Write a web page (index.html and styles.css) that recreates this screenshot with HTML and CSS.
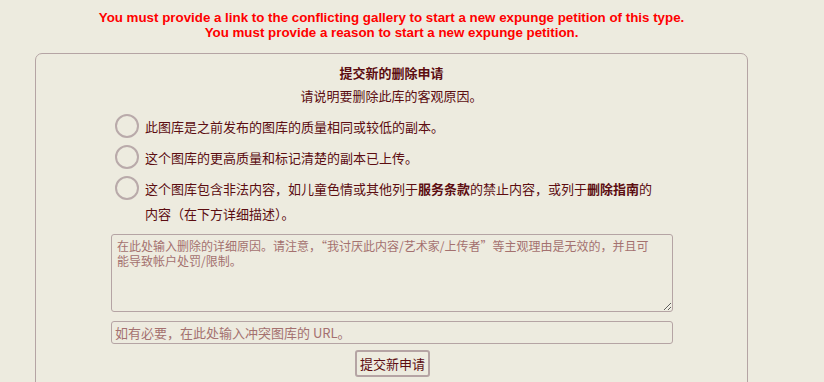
FILE: index.html
```html
<!DOCTYPE html>
<html lang="zh-CN">
<head>
<meta charset="utf-8">
<title>提交新的删除申请</title>
<link rel="stylesheet" href="styles.css">
</head>
<body>
<div class="page">
  <div class="errors">
    <p>You must provide a link to the conflicting gallery to start a new expunge petition of this type.</p>
    <p>You must provide a reason to start a new expunge petition.</p>
  </div>
  <div class="box">
    <h1 class="title">提交新的删除申请</h1>
    <p class="subtitle">请说明要删除此库的客观原因。</p>
    <div class="options">
      <label class="option"><span class="radio"></span><span class="otext">此图库是之前发布的图库的质量相同或较低的副本。</span></label>
      <label class="option"><span class="radio"></span><span class="otext">这个图库的更高质量和标记清楚的副本已上传。</span></label>
      <label class="option"><span class="radio"></span><span class="otext">这个图库包含非法内容，如儿童色情或其他列于<b>服务条款</b>的禁止内容，或列于<b>删除指南</b>的内容（在下方详细描述）。</span></label>
    </div>
    <textarea class="reason" placeholder="在此处输入删除的详细原因。请注意，“我讨厌此内容/艺术家/上传者”等主观理由是无效的，并且可能导致帐户处罚/限制。"></textarea>
    <input class="url" type="text" placeholder="如有必要，在此处输入冲突图库的 URL。">
    <div class="actions"><button class="submit" type="button">提交新申请</button></div>
  </div>
</div>
</body>
</html>
```
FILE: styles.css
```css
html, body {
  margin: 0;
  padding: 0;
  background: #EDEBDF;
}
body {
  color: #5C0D11;
  font-family: "Liberation Sans", "Noto Sans CJK SC", sans-serif;
  overflow: hidden;
}
.page {
  width: 783px;
}
.errors {
  padding-top: 10px;
  text-align: center;
  color: #FF0000;
  font-weight: bold;
  font-size: 13.33px;
  line-height: 15px;
}
.errors p {
  margin: 0;
}
.box {
  margin: 13px 0 0 35px;
  width: 711px;
  height: 360px;
  border: 1px solid #B5A4A4;
  border-radius: 7px;
  box-sizing: content-box;
  font-family: "Noto Sans CJK SC", "Liberation Sans", sans-serif;
  font-size: 13px;
}
.title {
  margin: 10px 0 0;
  font-size: 13px;
  font-weight: bold;
  line-height: 17px;
  text-align: center;
}
.subtitle {
  margin: 6px 0 0;
  line-height: 17px;
  text-align: center;
}
.options {
  margin: 10px 0 0 79px;
  width: 560px;
  display: flex;
  flex-direction: column;
  gap: 6px;
}
.option {
  display: flex;
  align-items: flex-start;
}
.radio {
  flex: none;
  width: 20px;
  height: 20px;
  border: 2px solid #B9AAAA;
  border-radius: 50%;
  margin-right: 6px;
}
.otext {
  width: 514px;
  line-height: 25px;
}
.otext b {
  font-weight: bold;
}
.reason {
  display: block;
  margin: 8px 0 0 75px;
  width: 562px;
  height: 78px;
  box-sizing: border-box;
  padding: 3px 16px 3px 5px;
  border: 1px solid #B5A4A4;
  border-radius: 3px;
  background: #EDEBDF;
  color: #5C0D11;
  font-family: "Noto Sans CJK SC", sans-serif;
  font-size: 12px;
  line-height: 15px;
  resize: both;
  outline: none;
}
.url {
  display: block;
  margin: 9px 0 0 75px;
  width: 562px;
  height: 23px;
  box-sizing: border-box;
  padding: 0 3px;
  border: 1px solid #B5A4A4;
  border-radius: 3px;
  background: #EDEBDF;
  color: #5C0D11;
  font-family: "Noto Sans CJK SC", sans-serif;
  font-size: 13px;
  outline: none;
}
.reason::placeholder, .url::placeholder {
  color: #A4716F;
  opacity: 1;
}
.actions {
  margin-top: 6px;
  text-align: center;
}
.submit {
  width: 75px;
  height: 27px;
  padding: 0;
  border: 2px solid #B5A4A4;
  border-radius: 3px;
  background: #EDEBDF;
  color: #5C0D11;
  font-family: "Noto Sans CJK SC", sans-serif;
  font-size: 13px;
  position: relative;
  left: 1px;
}
```
